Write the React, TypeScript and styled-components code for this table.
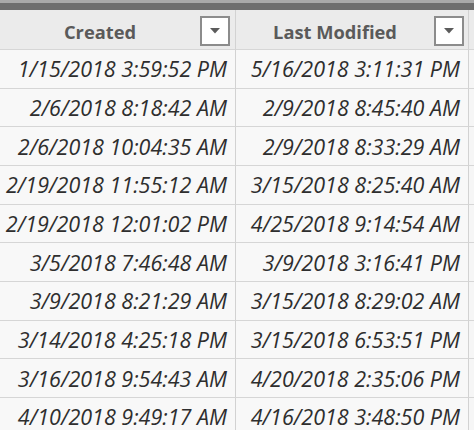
import React from "react";
import styled, { createGlobalStyle } from "styled-components";

const Global = createGlobalStyle`
  html, body { margin: 0; padding: 0; background: #f6f6f6; overflow: hidden; }
  body { font-family: "Open Sans", "Liberation Sans", sans-serif; }
`;

const Frame = styled.div`
  width: 474px;
  height: 430px;
  overflow: hidden;
  background: #f6f6f6;
  display: flex;
  flex-direction: column;
`;

const TopStrip = styled.div`
  height: 3px;
  background: #a9a9a9;
  flex: none;
`;

const DarkBand = styled.div`
  height: 7px;
  background: #6e6e6e;
  flex: none;
`;

const Grid = styled.div`
  display: grid;
  grid-template-columns: 236px 233px 5px;
`;

const HeaderCell = styled.div<{ $last?: boolean }>`
  height: 40px;
  box-sizing: border-box;
  background: #ebebeb;
  border-right: 1px solid #d2d2d2;
  border-bottom: 1px solid #d6d6d6;
  display: flex;
  align-items: center;
  padding-right: ${(p) => (p.$last ? "4px" : "5px")};
`;

const HeaderLabel = styled.span`
  flex: 1;
  text-align: center;
  font-weight: 700;
  font-size: 18.3px;
  color: #5a5a5a;
  padding-top: 3px;
`;

const FilterButton = styled.div`
  width: 30px;
  height: 30px;
  box-sizing: border-box;
  border: 2px solid #8c8c8c;
  background: #ffffff;
  display: flex;
  align-items: center;
  justify-content: center;
  margin-top: 2px;
`;

const Filler = styled.div<{ $header?: boolean }>`
  background: ${(p) => (p.$header ? "#ebebeb" : "#f6f6f6")};
  border-bottom: 1px solid #d6d6d6;
  box-sizing: border-box;
`;

const Cell = styled.div`
  height: 38.67px;
  box-sizing: border-box;
  background: #f8f8f8;
  border-right: 1px solid #d2d2d2;
  border-bottom: 1px solid #d6d6d6;
  display: flex;
  align-items: center;
  justify-content: flex-end;
  padding-right: 8px;
  font-style: italic;
  font-size: 21.5px;
  color: #2e2e2e;
  white-space: nowrap;
`;

const rows: [string, string][] = [
  ["1/15/2018 3:59:52 PM", "5/16/2018 3:11:31 PM"],
  ["2/6/2018 8:18:42 AM", "2/9/2018 8:45:40 AM"],
  ["2/6/2018 10:04:35 AM", "2/9/2018 8:33:29 AM"],
  ["2/19/2018 11:55:12 AM", "3/15/2018 8:25:40 AM"],
  ["2/19/2018 12:01:02 PM", "4/25/2018 9:14:54 AM"],
  ["3/5/2018 7:46:48 AM", "3/9/2018 3:16:41 PM"],
  ["3/9/2018 8:21:29 AM", "3/15/2018 8:29:02 AM"],
  ["3/14/2018 4:25:18 PM", "3/15/2018 6:53:51 PM"],
  ["3/16/2018 9:54:43 AM", "4/20/2018 2:35:06 PM"],
  ["4/10/2018 9:49:17 AM", "4/16/2018 3:48:50 PM"],
];

const Arrow = () => (
  <svg width="10" height="6" viewBox="0 0 10 6">
    <polygon points="0,0 10,0 5,5.5" fill="#5c5c5c" />
  </svg>
);

export default function App() {
  return (
    <Frame>
      <Global />
      <TopStrip />
      <DarkBand />
      <Grid>
        <HeaderCell>
          <HeaderLabel>Created</HeaderLabel>
          <FilterButton>
            <Arrow />
          </FilterButton>
        </HeaderCell>
        <HeaderCell $last>
          <HeaderLabel>Last Modified</HeaderLabel>
          <FilterButton>
            <Arrow />
          </FilterButton>
        </HeaderCell>
        <Filler $header />
        {rows.map(([a, b], i) => (
          <React.Fragment key={i}>
            <Cell>{a}</Cell>
            <Cell>{b}</Cell>
            <Filler />
          </React.Fragment>
        ))}
      </Grid>
    </Frame>
  );
}
